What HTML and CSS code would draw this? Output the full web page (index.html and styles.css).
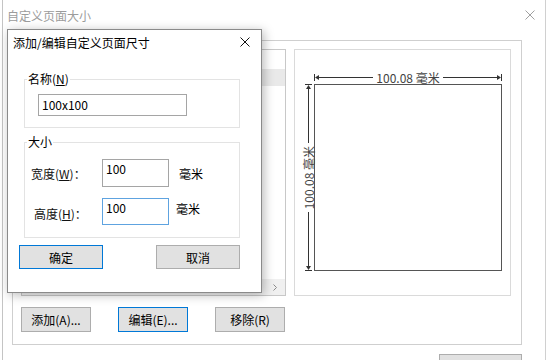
FILE: index.html
```html
<!DOCTYPE html>
<html>
<head>
  <title>自定义页面大小</title>
  <meta charset="utf-8">
  <link rel="stylesheet" href="styles.css">
</head>
<body>
  <!-- 主窗口 -->
  <div class="window">
    <div class="titlebar">
      <span>自定义页面大小</span>
      <svg class="close" width="10" height="10" viewBox="0 0 10 10"><path d="M0.5 0.5L9.5 9.5M9.5 0.5L0.5 9.5" stroke="#a0a0a0" stroke-width="1"/></svg>
    </div>

    <div class="group">
      <div class="panes">
        <div class="list">
          <div class="list-rows">
            <div class="row-sel"></div>
          </div>
          <div class="hscroll">
            <div class="thumb"></div>
            <svg class="chev" width="4" height="7" viewBox="0 0 4 7"><path d="M0.5 0.5L3.5 3.5L0.5 6.5" fill="none" stroke="#8a8a8a" stroke-width="1"/></svg>
          </div>
        </div>

        <div class="preview">
          <div class="hdim">
            <div class="tick-v"></div>
            <svg width="4" height="5" viewBox="0 0 4 5"><path d="M0 2.5L4 0V5Z" fill="#333"/></svg>
            <div class="seg"></div>
            <span class="dim-label">100.08 毫米</span>
            <div class="seg"></div>
            <svg width="4" height="5" viewBox="0 0 4 5"><path d="M4 2.5L0 0V5Z" fill="#333"/></svg>
            <div class="tick-v"></div>
          </div>
          <div class="vdim">
            <div class="tick-h"></div>
            <svg width="5" height="4" viewBox="0 0 5 4"><path d="M2.5 0L0 4H5Z" fill="#333"/></svg>
            <div class="seg-v"></div>
            <span class="vlabel">100.08 毫米</span>
            <div class="seg-v"></div>
            <svg width="5" height="4" viewBox="0 0 5 4"><path d="M2.5 4L0 0H5Z" fill="#333"/></svg>
            <div class="tick-h"></div>
          </div>
          <div class="page"></div>
        </div>
      </div>

      <div class="actions">
        <button class="btn">添加(A)...</button>
        <button class="btn default">编辑(E)...</button>
        <button class="btn">移除(R)</button>
      </div>
    </div>

    <div class="footer">
      <button class="btn wide"></button>
    </div>
  </div>

  <!-- 添加/编辑 对话框 -->
  <div class="dialog">
    <div class="dlg-title">
      <span>添加/编辑自定义页面尺寸</span>
      <svg width="10" height="10" viewBox="0 0 10 10"><path d="M0.5 0.5L9.5 9.5M9.5 0.5L0.5 9.5" stroke="#111" stroke-width="1"/></svg>
    </div>

    <div class="gbox name-box">
      <span class="gbox-label">名称(<u>N</u>)</span>
      <div class="textbox name-input">100x100</div>
    </div>

    <div class="gbox size-box">
      <span class="gbox-label">大小</span>
      <div class="field first">
        <span class="field-label">宽度(<u>W</u>)：</span>
        <div class="textbox num">100</div>
        <span class="unit">毫米</span>
      </div>
      <div class="field second">
        <span class="field-label">高度(<u>H</u>)：</span>
        <div class="textbox num focus">100</div>
        <span class="unit">毫米</span>
      </div>
    </div>

    <div class="dlg-actions">
      <button class="btn dlg-btn default">确定</button>
      <button class="btn dlg-btn">取消</button>
    </div>
  </div>
</body>
</html>
```

FILE: styles.css
```css
* {
  box-sizing: border-box;
}
body {
  margin: 0;
  width: 546px;
  height: 360px;
  overflow: hidden;
  position: relative;
  background: #fff;
  font-family: "Noto Sans CJK SC", sans-serif;
  font-size: 12px;
  color: #000;
}
.window {
  margin-left: 2px;
  width: 544px;
  height: 360px;
  overflow: hidden;
  border-left: 1px solid #c4c4c4;
  border-right: 1px solid #d0d0d0;
}
.titlebar {
  height: 30px;
  display: flex;
  align-items: center;
  justify-content: space-between;
  padding: 0 10px 0 4px;
  color: #9c9c9c;
}
.group {
  margin: 10px 0 0 9px;
  width: 510px;
  border: 1px solid #cfcfcf;
  padding: 8px 10px 12px 8px;
}
.panes {
  display: flex;
  gap: 8px;
  height: 247px;
}
.list {
  width: 265px;
  border: 1px solid #c8c8c8;
  display: flex;
  flex-direction: column;
}
.list-rows {
  flex: 1;
  padding-top: 19px;
}
.row-sel {
  height: 17px;
  background: #e9e9e9;
}
.hscroll {
  height: 16px;
  background: #f0f0f0;
  display: flex;
  align-items: center;
  padding: 0 8px 0 16px;
}
.thumb {
  width: 156px;
  height: 8px;
  background: #a8a8a8;
}
.chev {
  margin-left: auto;
}
.preview {
  width: 217px;
  border: 1px solid #dadada;
  display: grid;
  grid-template-columns: 19px 188px;
  grid-template-rows: 34px 187px;
}
.hdim {
  grid-column: 2;
  grid-row: 1;
  align-self: end;
  margin-bottom: 1px;
  height: 11px;
  display: flex;
  align-items: center;
}
.tick-v {
  width: 1px;
  height: 7px;
  background: #333;
}
.seg {
  flex: 1;
  height: 1px;
  background: #333;
}
.dim-label,
.vlabel {
  padding: 0 3px;
  line-height: 11px;
  color: #444;
  white-space: nowrap;
}
.vdim {
  grid-column: 1;
  grid-row: 2;
  justify-self: end;
  width: 11px;
  display: flex;
  flex-direction: column;
  align-items: center;
}
.tick-h {
  width: 7px;
  height: 1px;
  background: #333;
}
.seg-v {
  flex: 1;
  width: 1px;
  background: #333;
}
.vlabel {
  writing-mode: vertical-rl;
  text-orientation: sideways;
  transform: rotate(180deg);
  padding: 3px 0;
}
.page {
  grid-column: 2;
  grid-row: 2;
  border: 1px solid #555;
}
.actions {
  display: flex;
  justify-content: space-between;
  width: 264px;
  margin-top: 11px;
}
.btn {
  width: 70px;
  height: 25px;
  padding: 0;
  background: #e1e1e1;
  border: 1px solid #adadad;
  font: inherit;
  color: #000;
}
.btn.default {
  border-color: #0078d7;
}
.footer {
  display: flex;
  justify-content: flex-end;
  margin: 9px 0 0 9px;
  width: 510px;
}
.btn.wide {
  width: 83px;
}

/* 对话框 */
.dialog {
  position: absolute;
  left: 7px;
  top: 29px;
  width: 255px;
  height: 264px;
  background: #fff;
  border: 1px solid #8a8a8a;
  box-shadow: 2px 2px 10px rgba(0, 0, 0, 0.28);
}
.dlg-title {
  height: 24px;
  display: flex;
  align-items: center;
  justify-content: space-between;
  padding: 0 11px 0 5px;
}
.gbox {
  margin-left: 16px;
  width: 216px;
  border: 1px solid #e3e3e3;
}
.gbox-label {
  display: block;
  width: max-content;
  margin: -9px 0 0 2px;
  padding: 0 1px;
  line-height: 16px;
  background: #fff;
}
.name-box {
  margin-top: 25px;
  height: 49px;
}
.textbox {
  border: 1px solid #a5a5a5;
  padding: 0 3px;
}
.name-input {
  margin: 7px 0 0 13px;
  width: 149px;
  height: 22px;
  line-height: 20px;
}
.size-box {
  margin-top: 14px;
  height: 96px;
}
.field {
  display: flex;
  align-items: center;
  padding-left: 6px;
}
.field.first {
  margin-top: 9px;
  height: 28px;
}
.field.second {
  margin-top: 11px;
  height: 27px;
  align-items: flex-start;
}
.field-label {
  width: 71px;
  color: #111;
}
.second .field-label {
  padding-left: 3px;
  margin-top: 7px;
}
.num {
  width: 67px;
  height: 100%;
  padding: 1px 3px;
  line-height: 16px;
}
.num.focus {
  border-color: #5ea3e0;
}
.unit {
  margin-left: 10px;
}
.second .unit {
  margin-left: 7px;
  margin-top: 2px;
}
.dlg-actions {
  display: flex;
  justify-content: space-between;
  width: 221px;
  margin: 7px 0 0 11px;
}
.dlg-btn {
  width: 84px;
  height: 24px;
}
```
